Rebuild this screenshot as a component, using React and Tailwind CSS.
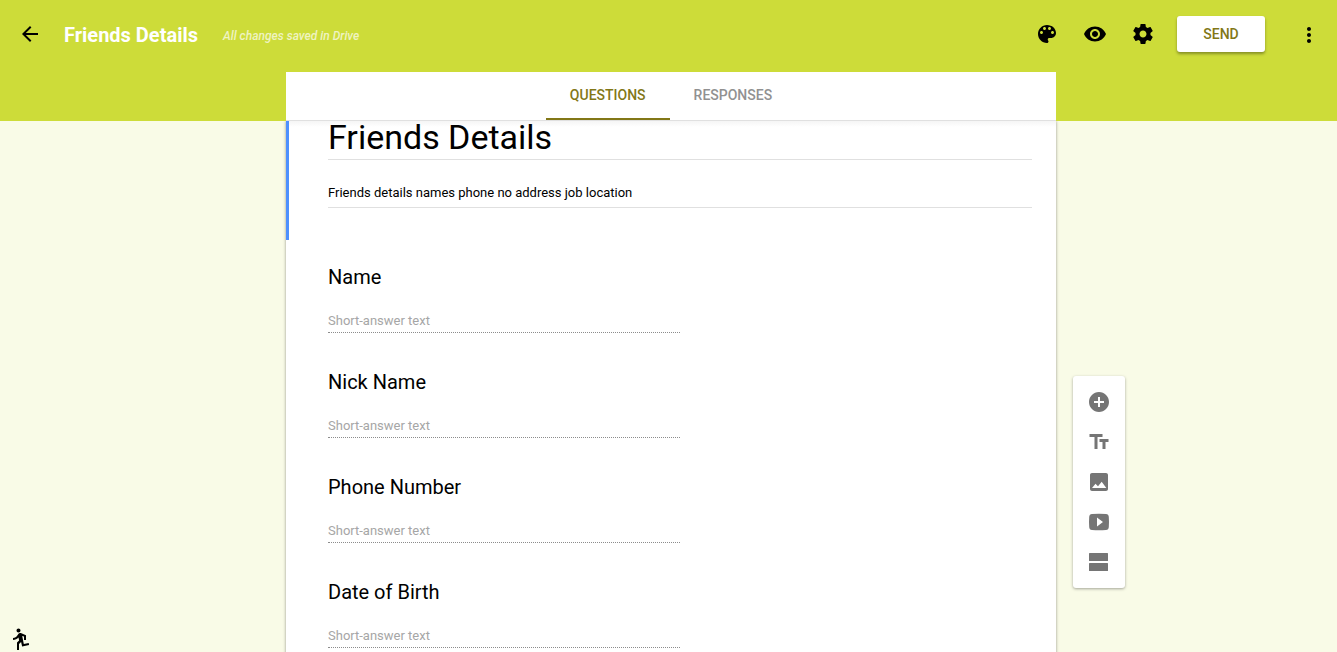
import { useState } from 'react';
import { MdAddCircle, MdArrowBack, MdDirectionsRun, MdMoreVert, MdTextFields, MdVisibility } from 'react-icons/md';

const PaletteIcon = () => (
  <svg viewBox="0 0 24 24" className="size-6" fill="currentColor">
    <path d="M12 3c-4.970 0-9 4.030-9 9s4.030 9 9 9c.83 0 1.500-.67 1.500-1.500 0-.39-.15-.74-.39-1.010-.23-.26-.38-.61-.38-.99 0-.83.67-1.500 1.500-1.500H16c2.760 0 5-2.240 5-5 0-4.420-4.030-8-9-8zm-5.500 9c-.83 0-1.500-.67-1.500-1.500S5.670 9 6.500 9 8 9.670 8 10.500 7.330 12 6.500 12zm3-4C8.670 8 8 7.330 8 6.500S8.670 5 9.500 5s1.500.67 1.500 1.500S10.330 8 9.500 8zm5 0c-.83 0-1.500-.67-1.500-1.500S13.670 5 14.500 5s1.500.67 1.500 1.500S15.330 8 14.500 8zm3 4c-.83 0-1.500-.67-1.500-1.500S16.670 9 17.500 9s1.500.67 1.500 1.500-.67 1.500-1.500 1.500z" />
  </svg>
);

const SettingsIcon = () => (
  <svg viewBox="0 0 24 24" className="size-6" fill="currentColor">
    <path d="M19.430 12.980c.04-.32.07-.64.07-.98s-.03-.66-.07-.98l2.110-1.650c.19-.15.24-.42.12-.64l-2-3.460c-.12-.22-.39-.3-.61-.22l-2.490 1c-.52-.4-1.080-.73-1.690-.98l-.38-2.650C14.460 2.180 14.250 2 14 2h-4c-.25 0-.46.18-.49.42l-.38 2.650c-.61.25-1.170.59-1.690.98l-2.490-1c-.23-.09-.49 0-.61.22l-2 3.460c-.13.22-.07.49.12.64l2.110 1.650c-.04.32-.07.65-.07.98s.03.66.07.98l-2.110 1.650c-.19.15-.24.42-.12.64l2 3.460c.12.22.39.3.61.22l2.490-1c.52.4 1.080.73 1.690.98l.38 2.650c.03.24.24.42.49.42h4c.25 0 .46-.18.49-.42l.38-2.650c.61-.25 1.170-.59 1.690-.98l2.490 1c.23.09.49 0 .61-.22l2-3.460c.12-.22.07-.49-.12-.64l-2.110-1.650zM12 15.500c-1.930 0-3.500-1.570-3.500-3.500s1.570-3.500 3.500-3.500 3.500 1.570 3.500 3.500-1.570 3.500-3.500 3.500z" />
  </svg>
);

const ImageIcon = () => (
  <svg viewBox="0 0 24 24" className="size-6" fill="currentColor" fillRule="evenodd">
    <path d="M21 19V5c0-1.100-.9-2-2-2H5c-1.100 0-2 .9-2 2v14c0 1.100.9 2 2 2h14c1.100 0 2-.9 2-2zM5 18l3.500-4.300 2.500 2.600 3.700-4.600L19.300 18H5z" />
  </svg>
);

const VideoIcon = () => (
  <svg viewBox="0 0 24 24" className="size-6" fill="currentColor" fillRule="evenodd">
    <path d="M5 4Q12 3.600 19 4Q21.600 4.200 21.800 7Q22.200 12 21.800 17Q21.600 19.800 19 20Q12 20.400 5 20Q2.400 19.800 2.200 17Q1.800 12 2.200 7Q2.400 4.200 5 4zM10 7.500v9l6-4.500z" />
  </svg>
);

const SectionIcon = () => (
  <svg viewBox="0 0 24 24" className="size-6" fill="currentColor">
    <rect x="2" y="3" width="19" height="8" rx="0.5" />
    <rect x="2" y="13" width="19" height="8" rx="0.5" />
  </svg>
);

const tools = [
  { label: 'Add question', icon: <MdAddCircle className="size-6" /> },
  { label: 'Add title and description', icon: <MdTextFields className="size-6" /> },
  { label: 'Add image', icon: <ImageIcon /> },
  { label: 'Add video', icon: <VideoIcon /> },
  { label: 'Add section', icon: <SectionIcon /> }
];

const headerActions = [
  { label: 'Color palette', icon: <PaletteIcon /> },
  { label: 'Preview', icon: <MdVisibility className="size-6" /> },
  { label: 'Settings', icon: <SettingsIcon /> }
];

const questions = [
  { id: 'name', title: 'Name' },
  { id: 'nick-name', title: 'Nick Name' },
  { id: 'phone-number', title: 'Phone Number' },
  { id: 'date-of-birth', title: 'Date of Birth' }
];

const Header = () => (
  <header className="flex h-[72px] items-start pl-[18px] pr-4">
    <button aria-label="Back to forms" className="mt-[22px] text-black"><MdArrowBack className="size-6" /></button>
    <h1 className="ml-[22px] mt-[21px] text-[20px] leading-7 font-bold text-white">Friends Details</h1>
    <span className="ml-[25px] mt-[26px] text-[12px] leading-5 font-medium text-white/70 italic">All changes saved in Drive</span>
    <div className="ml-auto flex items-start">
      <div className="mt-[22px] flex gap-6">
        {headerActions.map((action) => (
          <button key={action.label} aria-label={action.label} className="text-black">{action.icon}</button>
        ))}
      </div>
      <button className="ml-[22px] mt-4 h-9 w-[88px] rounded-[3px] bg-white text-[14px] font-medium text-[#827717] shadow-[0_2px_3px_rgba(0,0,0,0.35)]">SEND</button>
      <button aria-label="More" className="ml-8 mt-[23px] text-black"><MdMoreVert className="size-6" /></button>
    </div>
  </header>
);

const Tabs = ({ tab, setTab }) => (
  <div className="flex justify-center border-b border-[#e0e0e0] bg-white" role="tablist">
    {['Questions', 'Responses'].map((name) => (
      <button
        key={name}
        role="tab"
        aria-selected={tab === name}
        onClick={() => setTab(name)}
        className={`h-12 border-b-2 px-6 text-[14px] font-medium uppercase ${tab === name ? 'border-[#827717] text-[#827717]' : 'border-transparent text-[#919191]'}`}
      >
        {name}
      </button>
    ))}
  </div>
);

const Question = ({ id, title }) => (
  <div className="h-[105px] pl-[42px] pt-6">
    <label htmlFor={id} className="block text-[20px] leading-[26px] text-black">{title}</label>
    <input id={id} type="text" placeholder="Short-answer text" className="mt-[18px] block h-[25px] w-[352px] border-b border-dotted border-[#8c8c8c] text-[13px] outline-none placeholder:text-[#a6a6a6]" />
  </div>
);

const Toolbar = () => (
  <div className="ml-[17px] mt-[255px] flex w-[52px] flex-col items-center gap-4 self-start rounded-[3px] bg-white py-[14px] text-[#757575] shadow-[0_1px_3px_rgba(0,0,0,0.35)]" role="toolbar">
    {tools.map((tool) => (
      <button key={tool.label} aria-label={tool.label}>{tool.icon}</button>
    ))}
  </div>
);

const App = () => {
  const [tab, setTab] = useState('Questions');
  const [title, setTitle] = useState('Friends Details');
  const [description, setDescription] = useState('Friends details names phone no address job location');

  return (
    <div className="flex h-screen flex-col overflow-hidden bg-[#f9fbe7] font-[Roboto,sans-serif]">
      <div className="bg-[#cddc39]">
        <Header />
        <div className="grid grid-cols-[1fr_770px_1fr] pl-[5px]">
          <div className="col-start-2"><Tabs tab={tab} setTab={setTab} /></div>
        </div>
      </div>

      <main className="grid min-h-0 flex-1 grid-cols-[1fr_770px_1fr] overflow-hidden pl-[5px]">
        <div className="col-start-2 bg-white shadow-[0_0_3px_rgba(0,0,0,0.4)]">
          <div className="h-[119px] border-l-[3px] border-[#4d90fe] bg-linear-to-b from-[#f5f5f5] to-white to-[6px] pl-[39px] pr-6">
            <input type="text" aria-label="Form title" value={title} onChange={(e) => setTitle(e.target.value)} className="block h-[39px] w-full border-b border-[#e0e0e0] pb-[6px] text-[34px] leading-8 text-black outline-none" />
            <input type="text" aria-label="Form description" value={description} onChange={(e) => setDescription(e.target.value)} className="mt-[22px] block h-[26px] w-full border-b border-[#e0e0e0] pb-1 text-[13px] text-black outline-none" />
          </div>
          {questions.map((question) => <Question key={question.id} {...question} />)}
        </div>
        <Toolbar />
      </main>

      <button aria-label="Accessibility shortcuts" className="fixed bottom-px left-2 text-black">
        <MdDirectionsRun className="size-6 -scale-x-100" />
      </button>
    </div>
  );
};

export default App;
